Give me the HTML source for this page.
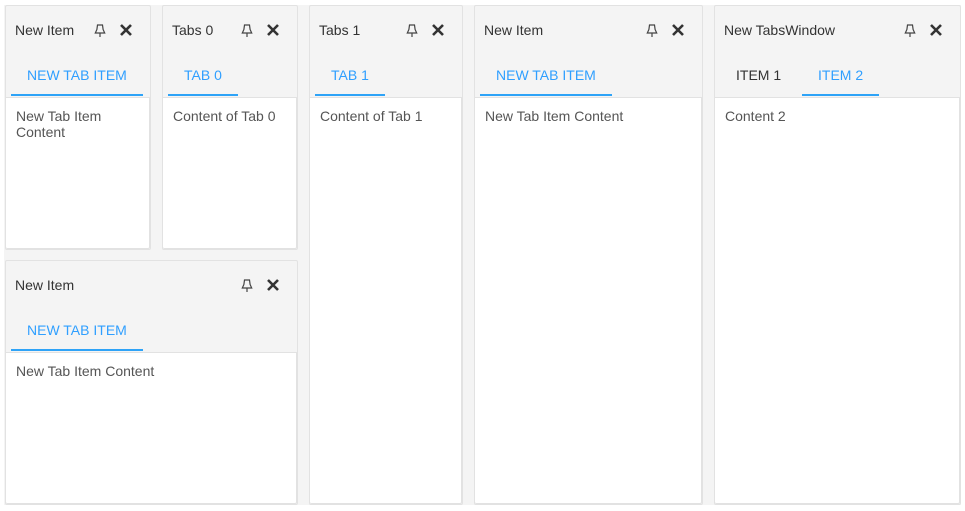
<!DOCTYPE html>
<html><head><meta charset="utf-8">
<style>
html,body{margin:0;padding:0;width:965px;height:511px;overflow:hidden;background:#fff;font-family:"Liberation Sans",sans-serif;font-size:14px}
.bg{position:absolute;left:4px;top:5px;width:957px;height:500px;background:#f4f4f4}
.p{position:absolute;box-sizing:border-box;background:#f4f4f4;border:1px solid #e2e2e2;border-radius:2px}
.h{position:absolute;left:9px;top:15px;line-height:18px;color:#333;white-space:nowrap}
.pin{position:absolute;top:16px;width:14px;height:16px}
.x{position:absolute;top:17px;width:14px;height:14px}
.t{position:absolute;top:61px;line-height:16px;color:#2f9fff;white-space:nowrap}
.t.d{color:#333}
.u{position:absolute;top:88px;height:2px;background:#2ea3f7}
.c{position:absolute;left:0;right:0;top:91px;bottom:0;background:#fff;border-top:1px solid #e2e2e2;border-right:1px solid #e2e2e2;border-bottom:1px solid #e2e2e2;border-radius:0 0 2px 2px;box-sizing:border-box;color:#555;line-height:16px;padding:10px 10px}
</style></head><body>
<div class="bg"></div>

<div class="p" style="left:5px;top:5px;width:146px;height:245px">
<div class="h">New Item</div>
<svg class="pin" style="left:87px" viewBox="0 0 14 16"><path d="M4.500 3h5l.6 4.500 1.600 3.500H2.300l1.600-3.500zM7 11v4" fill="none" stroke="#444" stroke-width="1.200"/></svg>
<svg class="x" style="left:113px" viewBox="0 0 14 14"><path d="M2 2l10 10M12 2L2 12" fill="none" stroke="#333" stroke-width="2.600"/></svg>
<div class="t" style="left:21px">NEW TAB ITEM</div>
<div class="u" style="left:5px;width:132px"></div>
<div class="c">New Tab Item Content</div>
</div>

<div class="p" style="left:162px;top:5px;width:136px;height:245px">
<div class="h">Tabs 0</div>
<svg class="pin" style="left:77px" viewBox="0 0 14 16"><path d="M4.500 3h5l.6 4.500 1.600 3.500H2.300l1.600-3.500zM7 11v4" fill="none" stroke="#444" stroke-width="1.200"/></svg>
<svg class="x" style="left:103px" viewBox="0 0 14 14"><path d="M2 2l10 10M12 2L2 12" fill="none" stroke="#333" stroke-width="2.600"/></svg>
<div class="t" style="left:21px">TAB 0</div>
<div class="u" style="left:5px;width:70px"></div>
<div class="c">Content of Tab 0</div>
</div>

<div class="p" style="left:5px;top:260px;width:293px;height:245px">
<div class="h">New Item</div>
<svg class="pin" style="left:234px" viewBox="0 0 14 16"><path d="M4.500 3h5l.6 4.500 1.600 3.500H2.300l1.600-3.500zM7 11v4" fill="none" stroke="#444" stroke-width="1.200"/></svg>
<svg class="x" style="left:260px" viewBox="0 0 14 14"><path d="M2 2l10 10M12 2L2 12" fill="none" stroke="#333" stroke-width="2.600"/></svg>
<div class="t" style="left:21px">NEW TAB ITEM</div>
<div class="u" style="left:5px;width:132px"></div>
<div class="c">New Tab Item Content</div>
</div>

<div class="p" style="left:309px;top:5px;width:154px;height:500px">
<div class="h">Tabs 1</div>
<svg class="pin" style="left:95px" viewBox="0 0 14 16"><path d="M4.500 3h5l.6 4.500 1.600 3.500H2.300l1.600-3.500zM7 11v4" fill="none" stroke="#444" stroke-width="1.200"/></svg>
<svg class="x" style="left:121px" viewBox="0 0 14 14"><path d="M2 2l10 10M12 2L2 12" fill="none" stroke="#333" stroke-width="2.600"/></svg>
<div class="t" style="left:21px">TAB 1</div>
<div class="u" style="left:5px;width:70px"></div>
<div class="c">Content of Tab 1</div>
</div>

<div class="p" style="left:474px;top:5px;width:229px;height:500px">
<div class="h">New Item</div>
<svg class="pin" style="left:170px" viewBox="0 0 14 16"><path d="M4.500 3h5l.6 4.500 1.600 3.500H2.300l1.600-3.500zM7 11v4" fill="none" stroke="#444" stroke-width="1.200"/></svg>
<svg class="x" style="left:196px" viewBox="0 0 14 14"><path d="M2 2l10 10M12 2L2 12" fill="none" stroke="#333" stroke-width="2.600"/></svg>
<div class="t" style="left:21px">NEW TAB ITEM</div>
<div class="u" style="left:5px;width:132px"></div>
<div class="c">New Tab Item Content</div>
</div>

<div class="p" style="left:714px;top:5px;width:247px;height:500px">
<div class="h">New TabsWindow</div>
<svg class="pin" style="left:188px" viewBox="0 0 14 16"><path d="M4.500 3h5l.6 4.500 1.600 3.500H2.300l1.600-3.500zM7 11v4" fill="none" stroke="#444" stroke-width="1.200"/></svg>
<svg class="x" style="left:214px" viewBox="0 0 14 14"><path d="M2 2l10 10M12 2L2 12" fill="none" stroke="#333" stroke-width="2.600"/></svg>
<div class="t d" style="left:21px">ITEM 1</div>
<div class="t" style="left:103px">ITEM 2</div>
<div class="u" style="left:87px;width:77px"></div>
<div class="c">Content 2</div>
</div>

</body></html>
